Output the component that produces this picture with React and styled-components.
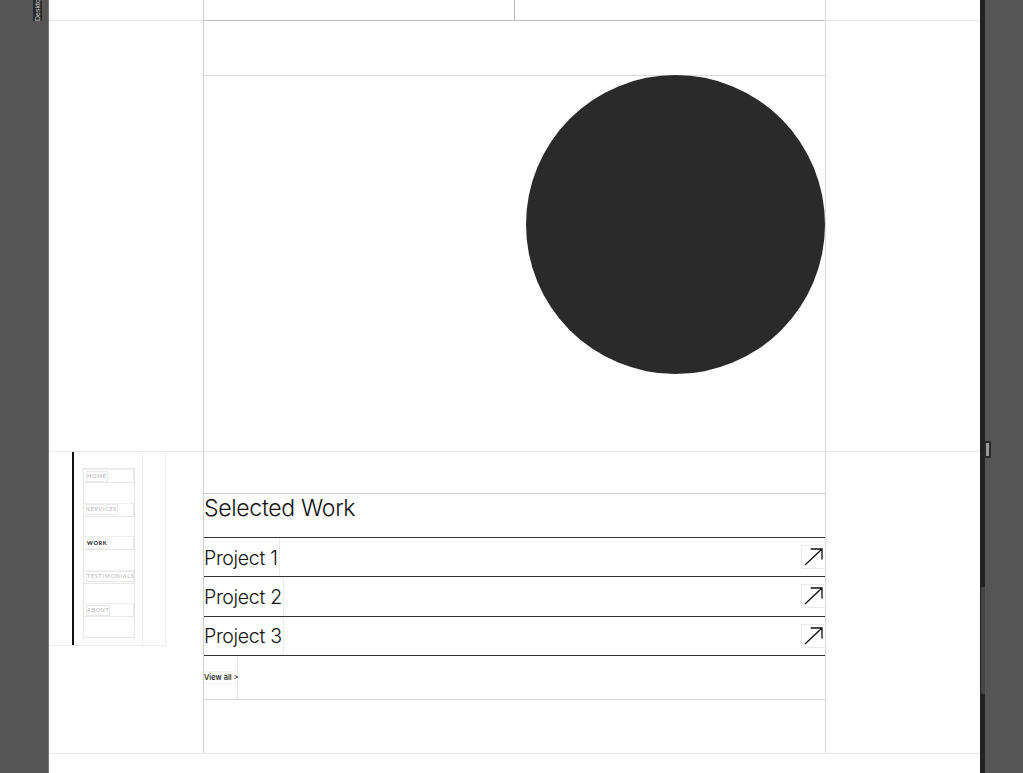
import React from "react";
import styled, { createGlobalStyle } from "styled-components";

const GlobalStyle = createGlobalStyle`
  html, body {
    margin: 0;
    height: 100%;
    overflow: hidden;
    background: #555;
    font-family: Inter, "Noto Sans", sans-serif;
  }
`;

const Stage = styled.div`
  display: flex;
  height: 773px;
  width: 1023px;
  overflow: hidden;
`;

const Gutter = styled.div`
  position: relative;
  width: 48px;
  flex: none;
  background: #555;
  border-right: 1px solid #777;
`;

const DeskTab = styled.div`
  position: absolute;
  right: 6px;
  top: 0;
  width: 9px;
  height: 21px;
  background: #2a2a2a;
  border-radius: 2px 0 0 2px;
  overflow: hidden;
  color: #ccc;
  font: 7px "Liberation Sans", sans-serif;
  writing-mode: vertical-rl;
  transform: rotate(180deg);
  line-height: 9px;
`;

const Canvas = styled.main`
  width: 931px;
  flex: none;
  background: #fff;
  color: #111;
`;

const Section = styled.section`
  position: relative;
  border-bottom: 1px solid #e6e6e6;
  height: ${(p) => p.$height}px;
  box-sizing: border-box;
  padding-left: 154px;
`;

const Column = styled.div`
  width: 623px;
  height: 100%;
  box-sizing: border-box;
  border-left: 1px solid #cfcfcf;
  border-right: 1px solid #dcdcdc;
  padding-top: ${(p) => p.$top || 0}px;
`;

const TopCells = styled.div`
  display: grid;
  grid-template-columns: 310px 1fr;
  height: 21px;
  border-bottom: 1px solid #bdbdbd;
  box-sizing: border-box;
`;

const TopCell = styled.div`
  & + & {
    border-left: 1px solid #bdbdbd;
  }
`;

const HeroBody = styled.div`
  height: 376px;
  border-top: 1px solid #d8d8d8;
  display: flex;
  justify-content: flex-end;
  align-items: flex-start;
`;

const Circle = styled.div`
  width: 299px;
  height: 299px;
  margin-top: -1px;
  border-radius: 50%;
  background: #2a2a2a;
`;

const Heading = styled.h2`
  margin: 0;
  height: 44px;
  box-sizing: border-box;
  border-top: 1px solid #d0d0d0;
  font-size: 23px;
  font-weight: 300;
  letter-spacing: -0.3px;
  line-height: 28px;
  color: #111;
`;

const ProjectList = styled.div`
  border-top: 1px solid #333;
`;

const ProjectRow = styled.div`
  display: flex;
  justify-content: space-between;
  align-items: center;
  height: 39.33px;
  box-sizing: border-box;
  border-bottom: 1px solid #333;
`;

const ProjectName = styled.span`
  align-self: stretch;
  display: flex;
  align-items: center;
  padding: 1px 1px 0 0;
  border-right: 1px solid #ececec;
  font-size: 19.5px;
  font-weight: 300;
  letter-spacing: -0.3px;
  color: #111;
`;

const ArrowBox = styled.span`
  width: 24px;
  height: 24px;
  border: 1px solid #eaeaea;
  border-right: 0;
  box-sizing: border-box;
  display: flex;
`;

const ViewRow = styled.div`
  height: 44px;
  box-sizing: border-box;
  border-bottom: 1px solid #d4d4d4;
  display: flex;
`;

const ViewCell = styled.div`
  display: flex;
  align-items: center;
  width: 33px;
  border-right: 1px solid #e8e8e8;
`;

const ViewAll = styled.a`
  display: block;
  width: 100%;
  border-top: 1px solid #f2f2f2;
  border-bottom: 1px solid #f2f2f2;
  font-size: 7.5px;
  line-height: 11px;
  font-weight: 500;
  white-space: nowrap;
  color: #111;
`;

const NavShell = styled.div`
  position: absolute;
  left: 0;
  top: -1px;
  width: 117px;
  height: 195px;
  box-sizing: border-box;
  border: 1px solid #ececec;
  border-left: 0;
  padding-left: 23px;
`;

const NavRail = styled.nav`
  width: 71px;
  height: 100%;
  box-sizing: border-box;
  border-left: 2px solid #111;
  border-right: 1px solid #ececec;
  padding: 16px 7px 7px 9px;
`;

const NavList = styled.ul`
  list-style: none;
  margin: 0;
  padding: 0;
  height: 170px;
  box-sizing: border-box;
  border: 1px solid #e6e6e6;
  display: flex;
  flex-direction: column;
  gap: 19.5px;
`;

const NavItem = styled.li`
  height: 14px;
  box-sizing: border-box;
  border: 1px solid #e8e8e8;
  border-top-color: #f0f0f0;
  border-left: 0;
  display: flex;
  align-items: center;
  padding-left: 2px;
  overflow: hidden;
`;

const NavLabel = styled.span`
  font-size: 5.5px;
  letter-spacing: 0.7px;
  line-height: 9px;
  white-space: nowrap;
  font-family: Lato, sans-serif;
  font-weight: ${(p) => (p.$active ? 700 : 400)};
  color: ${(p) => (p.$active ? "#111" : "#b4b4b4")};
  border: 1px solid ${(p) => (p.$active ? "#f2f2f2" : "#e9e9e9")};
`;

const ScrollEdge = styled.div`
  position: relative;
  width: 5px;
  flex: none;
  background: #222;
`;

const ScrollThumb = styled.div`
  position: absolute;
  top: 587px;
  left: 1px;
  width: 4px;
  height: 107px;
  background: #444;
`;

const Handle = styled.div`
  position: absolute;
  left: 4px;
  top: 441px;
  width: 7px;
  height: 17px;
  box-sizing: border-box;
  background: #999;
  border: 2px solid #2a2a2a;
  border-radius: 1px;
`;

const RightPane = styled.div`
  flex: 1;
  background: #555;
`;

function Arrow() {
  return (
    <svg width="23" height="22" viewBox="0 0 23 22" fill="none" stroke="#111" strokeWidth="1.3">
      <path d="M3 19 L20 3 M8.7 3 H20 V13.5" />
    </svg>
  );
}

const navItems = ["HOME", "SERVICES", "WORK", "TESTIMONIALS", "ABOUT"];
const projects = ["Project 1", "Project 2", "Project 3"];

export default function App() {
  return (
    <>
      <GlobalStyle />
      <Stage>
        <Gutter>
          <DeskTab>Desktop</DeskTab>
        </Gutter>
        <Canvas>
          <Section $height={21}>
            <Column>
              <TopCells>
                <TopCell />
                <TopCell />
              </TopCells>
            </Column>
          </Section>
          <Section $height={431}>
            <Column $top={54}>
              <HeroBody>
                <Circle />
              </HeroBody>
            </Column>
          </Section>
          <Section $height={302}>
            <NavShell>
              <NavRail>
                <NavList>
                  {navItems.map((item) => (
                    <NavItem key={item}>
                      <NavLabel $active={item === "WORK"}>{item}</NavLabel>
                    </NavItem>
                  ))}
                </NavList>
              </NavRail>
            </NavShell>
            <Column $top={41}>
              <Heading>Selected Work</Heading>
              <ProjectList>
                {projects.map((name) => (
                  <ProjectRow key={name}>
                    <ProjectName>{name}</ProjectName>
                    <ArrowBox>
                      <Arrow />
                    </ArrowBox>
                  </ProjectRow>
                ))}
              </ProjectList>
              <ViewRow>
                <ViewCell>
                  <ViewAll>View all &gt;</ViewAll>
                </ViewCell>
              </ViewRow>
            </Column>
          </Section>
        </Canvas>
        <ScrollEdge>
          <ScrollThumb />
          <Handle />
        </ScrollEdge>
        <RightPane />
      </Stage>
    </>
  );
}
